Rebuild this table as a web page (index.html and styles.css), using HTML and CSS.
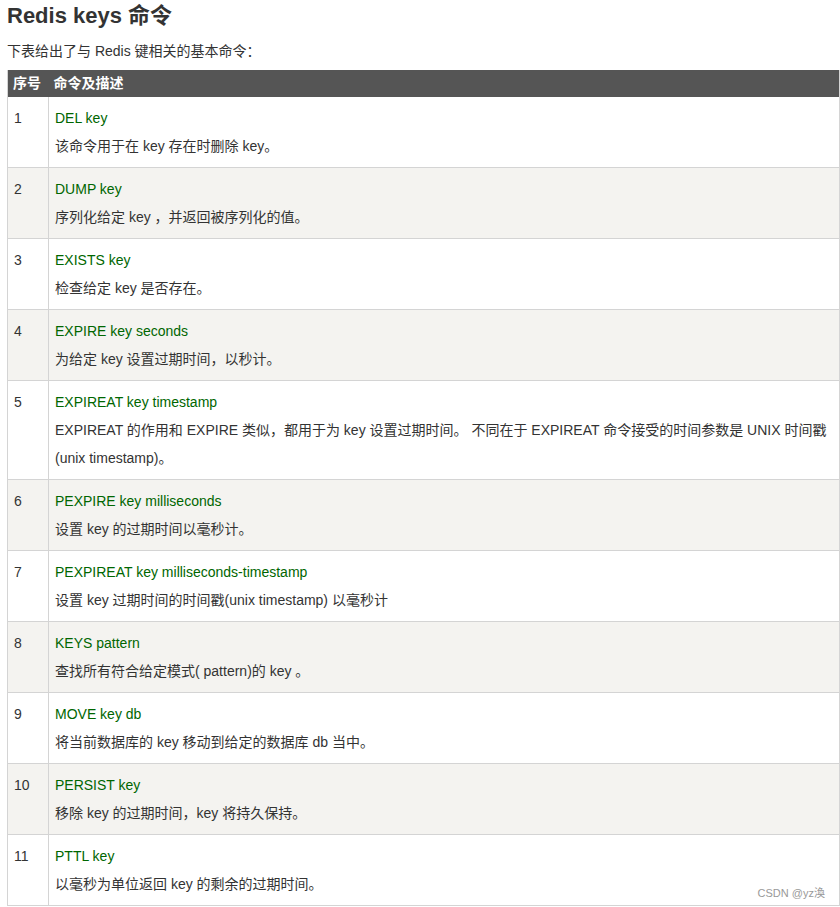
FILE: index.html
```html
<!DOCTYPE html>
<html lang="zh">
<head>
<meta charset="utf-8">
<link rel="stylesheet" href="styles.css">
</head>
<body>
<h2 class="title">Redis keys 命令</h2>
<p class="intro">下表给出了与 Redis 键相关的基本命令：</p>
<table class="ref">
<thead>
<tr><th class="c1">序号</th><th>命令及描述</th></tr>
</thead>
<tbody>
<tr><td class="c1">1</td><td><a class="cmd">DEL key</a><br>该命令用于在 key 存在时删除 key。</td></tr>
<tr><td class="c1">2</td><td><a class="cmd">DUMP key</a><br>序列化给定 key ，并返回被序列化的值。</td></tr>
<tr><td class="c1">3</td><td><a class="cmd">EXISTS key</a><br>检查给定 key 是否存在。</td></tr>
<tr><td class="c1">4</td><td><a class="cmd">EXPIRE key seconds</a><br>为给定 key 设置过期时间，以秒计。</td></tr>
<tr><td class="c1">5</td><td><a class="cmd">EXPIREAT key timestamp</a><br>EXPIREAT 的作用和 EXPIRE 类似，都用于为 key 设置过期时间。 不同在于 EXPIREAT 命令接受的时间参数是 UNIX 时间戳 (unix timestamp)。</td></tr>
<tr><td class="c1">6</td><td><a class="cmd">PEXPIRE key milliseconds</a><br>设置 key 的过期时间以毫秒计。</td></tr>
<tr><td class="c1">7</td><td><a class="cmd">PEXPIREAT key milliseconds-timestamp</a><br>设置 key 过期时间的时间戳(unix timestamp) 以毫秒计</td></tr>
<tr><td class="c1">8</td><td><a class="cmd">KEYS pattern</a><br>查找所有符合给定模式( pattern)的 key 。</td></tr>
<tr><td class="c1">9</td><td><a class="cmd">MOVE key db</a><br>将当前数据库的 key 移动到给定的数据库 db 当中。</td></tr>
<tr><td class="c1">10</td><td><a class="cmd">PERSIST key</a><br>移除 key 的过期时间，key 将持久保持。</td></tr>
<tr><td class="c1">11</td><td><a class="cmd">PTTL key</a><br>以毫秒为单位返回 key 的剩余的过期时间。</td></tr>
</tbody>
</table>
<div class="watermark">CSDN @yz渙</div>
</body>
</html>
```
FILE: styles.css
```css
html, body {
  margin: 0;
  padding: 0;
  background: #fff;
}
body {
  padding: 0 0 0 7px;
  font-family: "Liberation Sans", Arial, "Noto Sans CJK SC", sans-serif;
  color: #333;
  font-size: 14px;
  position: relative;
  overflow: hidden;
  height: 907px;
}
.title {
  margin: 0;
  padding-top: 3px;
  font-size: 22px;
  line-height: 26px;
  font-weight: bold;
  color: #333;
}
.intro {
  margin: 12px 0 0 0;
  line-height: 20px;
  font-size: 14px;
}
.ref {
  margin-top: 9px;
  border-collapse: collapse;
  width: 833px;
  border-left: 1px solid #d4d4d4;
  border-right: 1px solid #d4d4d4;
}
.ref th {
  background: #555;
  color: #fff;
  text-align: left;
  font-weight: bold;
  font-size: 14px;
  height: 27px;
  padding: 0 5px;
  line-height: 27px;
}
.ref td {
  vertical-align: top;
  padding: 7px 6px 7px 6px;
  line-height: 28px;
  border-bottom: 1px solid #d4d4d4;
  font-size: 14px;
}
.ref td.c1 {
  width: 28px;
  border-right: 1px solid #d4d4d4;
}
.ref tbody tr:nth-child(even) td {
  background: #f4f3f0;
}
.cmd {
  color: #006600;
  text-decoration: none;
}
.watermark {
  position: absolute;
  right: 15px;
  top: 884px;
  font-size: 11px;
  color: #999;
}
```
